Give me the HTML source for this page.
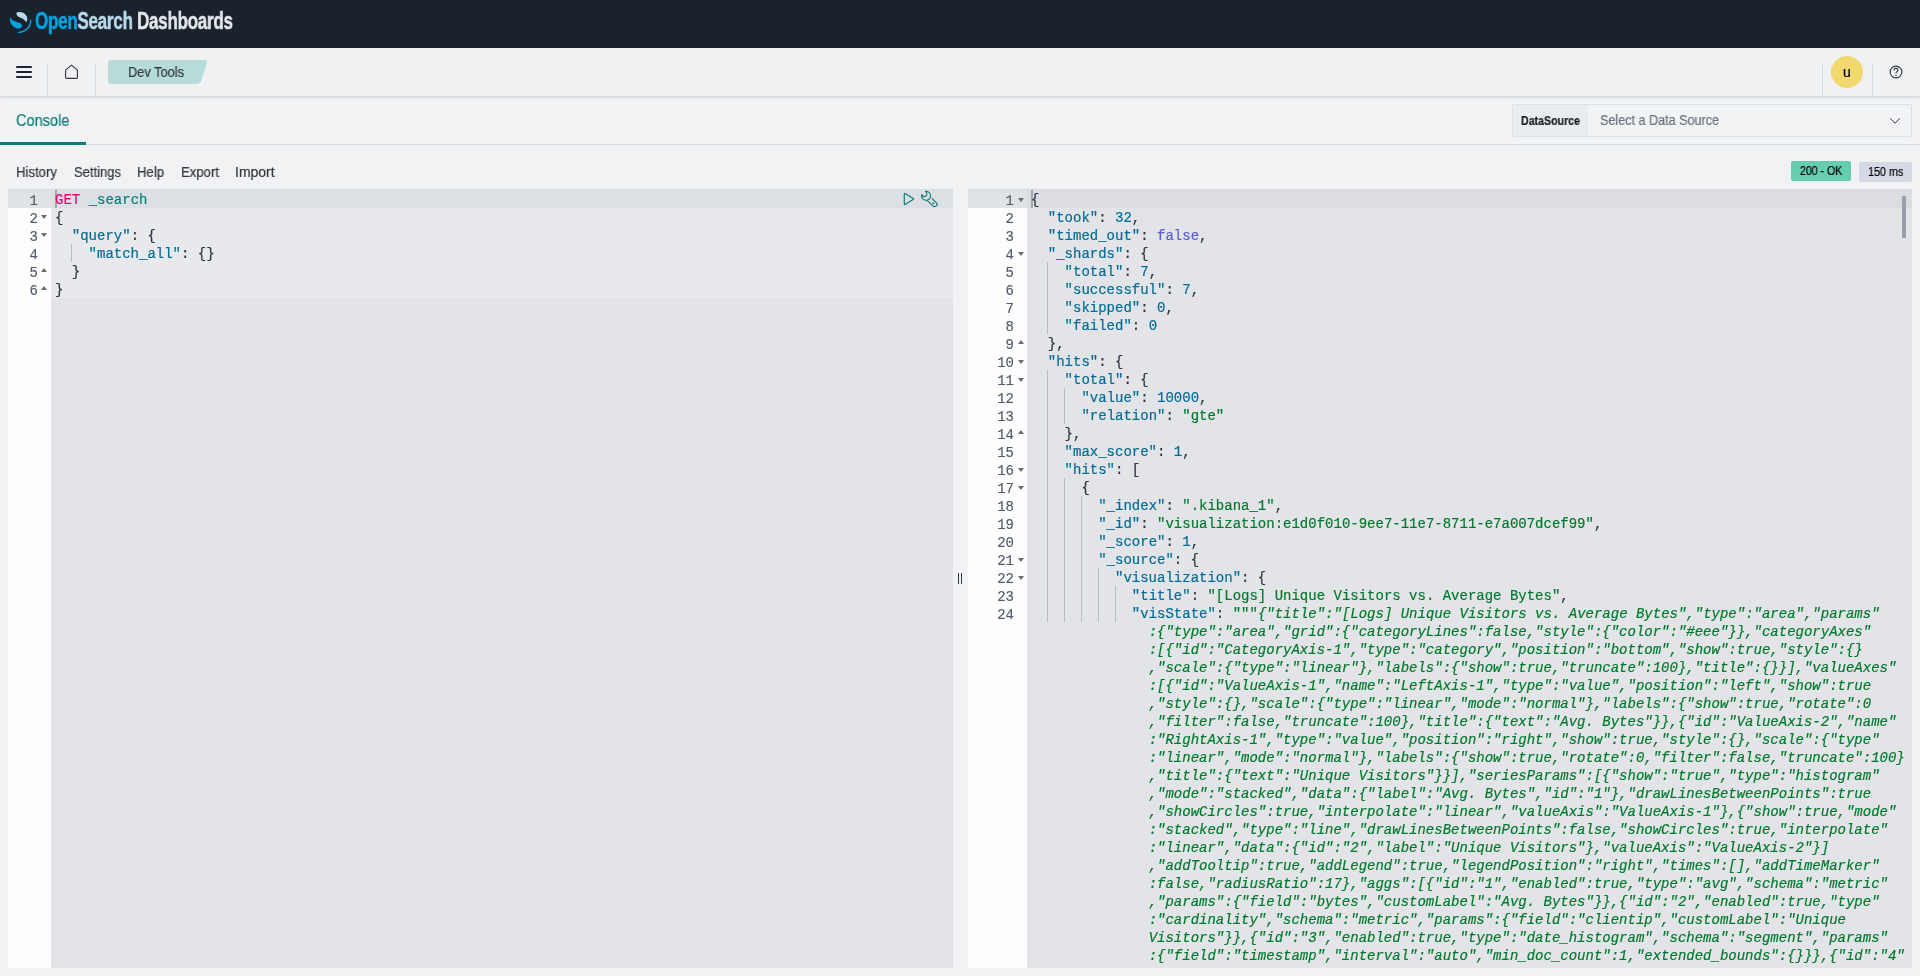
<!DOCTYPE html>
<html><head><meta charset="utf-8">
<style>
*{box-sizing:border-box;margin:0;padding:0}
html,body{width:1920px;height:976px;overflow:hidden;background:#f1f2f4;font-family:"Liberation Sans",sans-serif;position:relative}
.abs{position:absolute}
#hdr{left:0;top:0;width:1920px;height:48px;background:#19222d}
#bar{left:0;top:48px;width:1920px;height:48px;background:#f0f1f3;box-shadow:0 1px 3px rgba(40,60,80,.14),0 2px 4px rgba(40,60,80,.05)}
.vdiv{width:1px;background:#d8dce2}
.txt{white-space:nowrap;transform-origin:0 0;display:inline-block;will-change:transform;-webkit-text-stroke:0.2px currentColor}
.code{font-family:"Liberation Mono",monospace;font-size:14px;line-height:18px;white-space:pre;color:#2f3440;will-change:transform;-webkit-text-stroke:0.2px currentColor}
.gut{font-family:"Liberation Mono",monospace;font-size:14px;line-height:18px;white-space:pre;color:#535b69;text-align:right;will-change:transform;-webkit-text-stroke:0.15px currentColor}
.k{color:#016c95}.s{color:#00792e}.n{color:#016c95}.b{color:#5b5cd6}.p{color:#343741}
.m{color:#dd0a73}.u{color:#0b7f77}
.i{font-style:italic;color:#00792e}
.fold{position:absolute;width:0;height:0;border-left:3px solid transparent;border-right:3px solid transparent}
.fd{border-top:4px solid #6b6b6b}
.fu{border-bottom:4px solid #6b6b6b}
.guide{position:absolute;width:1px;background:#b8bcc4}
</style></head><body>
<!-- top header -->
<div id="hdr" class="abs">
  <svg class="abs" style="left:9px;top:11px" width="24" height="24" viewBox="0 0 24 24">
    <path d="M7.5 1.6 C11 0.2 16 1.6 17.8 5.5 C18.6 7.2 18.3 9.5 17.5 11.3 C16.2 9.3 14.5 8 12 7 C9.5 6 7.2 5 7.5 1.6Z" fill="#b9d9eb"/>
    <path d="M1.2 5.9 C0.2 9 1 12.6 4.2 15.4 C6.5 17.3 10 18.3 12.2 16.5 C13.8 15.2 13 13 11 12 C8 10.5 3 10.5 1.2 5.9Z" fill="#00a3e0"/>
    <path d="M21.6 9.2 C22 14.5 18.5 20.5 9.3 21.4" stroke="#00a3e0" stroke-width="1.3" fill="none" stroke-linecap="round"/>
  </svg>
  <div class="abs txt" style="left:35px;top:7px;font-size:24px;font-weight:700;letter-spacing:-0.4px;transform:scaleX(0.71);-webkit-text-stroke:0.5px currentColor;will-change:transform"><span style="color:#00a3e0">Open</span><span style="color:#b9d9eb">Search</span><span style="color:#e3e6e9"> Dashboards</span></div>
</div>
<!-- second bar -->
<div id="bar" class="abs">
  <div class="abs" style="left:16px;top:18px;width:16px;height:2px;background:#1a2330;border-radius:1px"></div>
  <div class="abs" style="left:16px;top:23px;width:16px;height:2px;background:#1a2330;border-radius:1px"></div>
  <div class="abs" style="left:16px;top:28px;width:16px;height:2px;background:#1a2330;border-radius:1px"></div>
  <div class="abs vdiv" style="left:47px;top:16px;height:32px"></div>
  <svg class="abs" style="left:64px;top:16px" width="16" height="16" viewBox="0 0 16 16">
    <path d="M1.6 6.2 L7.5 1.2 L13.4 6.2 L13.4 13.6 Q13.4 14.4 12.6 14.4 L2.4 14.4 Q1.6 14.4 1.6 13.6 Z" fill="none" stroke="#343741" stroke-width="1.1" stroke-linejoin="round"/>
  </svg>
  <div class="abs vdiv" style="left:95px;top:16px;height:32px"></div>
  <svg class="abs" style="left:108px;top:12px" width="100" height="24" viewBox="0 0 100 24">
    <path d="M3 0 H96 Q100 0 98.8 3.6 L93.5 20 Q92.4 24 88.5 24 H3 Q0 24 0 21 V3 Q0 0 3 0Z" fill="#b6dcda"/>
  </svg>
  <div class="abs txt" style="left:128px;top:16px;font-size:14px;color:#343741;transform:scaleX(0.915)">Dev Tools</div>
  <div class="abs vdiv" style="left:1822px;top:16px;height:32px"></div>
  <div class="abs" style="left:1831px;top:8px;width:32px;height:32px;border-radius:50%;background:#f1d86f"></div>
  <div class="abs txt" style="left:1843px;top:16px;font-size:14px;color:#000">u</div>
  <div class="abs vdiv" style="left:1872px;top:16px;height:32px"></div>
  <svg class="abs" style="left:1889px;top:17px" width="14" height="14" viewBox="0 0 14 14">
    <circle cx="7" cy="7" r="5.9" fill="none" stroke="#343741" stroke-width="1.1"/>
    <path d="M5 5.4 Q5 3.4 7 3.4 Q9 3.4 9 5.2 Q9 6.4 7.6 7 Q7 7.3 7 8.3" fill="none" stroke="#343741" stroke-width="1.1"/>
    <circle cx="7" cy="10.2" r="0.7" fill="#343741"/>
  </svg>
</div>
<!-- tabs -->
<div class="abs txt" style="left:16px;top:112px;font-size:16px;color:#0d7d77;transform:scaleX(0.91)">Console</div>
<div class="abs" style="left:0;top:144px;width:1920px;height:1px;background:#d3d7dd"></div>
<div class="abs" style="left:0;top:142px;width:86px;height:3px;background:#0d7d77"></div>
<!-- datasource -->
<div class="abs" style="left:1512px;top:104px;width:400px;height:33px;border:1px solid #dde1e7;background:#f2f3f5;border-radius:2px"></div>
<div class="abs" style="left:1513px;top:105px;width:75px;height:31px;background:#e9ecf0"></div>
<div class="abs txt" style="left:1521px;top:114px;font-size:12px;font-weight:700;color:#1a1c21;transform:scaleX(0.885)">DataSource</div>
<div class="abs txt" style="left:1600px;top:112px;font-size:14px;color:#69707d;transform:scaleX(0.9)">Select a Data Source</div>
<svg class="abs" style="left:1889px;top:116px" width="12" height="10" viewBox="0 0 12 10">
  <path d="M1.2 2.3 L6 7.3 L10.8 2.3" fill="none" stroke="#343741" stroke-width="1"/>
</svg>
<!-- menu -->
<div class="abs txt" style="left:16px;top:164px;font-size:14px;color:#343741;transform:scaleX(0.94)">History</div>
<div class="abs txt" style="left:74px;top:164px;font-size:14px;color:#343741;transform:scaleX(0.93)">Settings</div>
<div class="abs txt" style="left:137px;top:164px;font-size:14px;color:#343741;transform:scaleX(0.94)">Help</div>
<div class="abs txt" style="left:181px;top:164px;font-size:14px;color:#343741;transform:scaleX(0.94)">Export</div>
<div class="abs txt" style="left:235px;top:164px;font-size:14px;color:#343741;transform:scaleX(1.0)">Import</div>
<!-- badges -->
<div class="abs" style="left:1791px;top:161px;width:60px;height:20px;background:#67cdb1;border-radius:2px"></div>
<div class="abs txt" style="left:1800px;top:164px;font-size:12px;color:#000;transform:scaleX(0.88)">200 - OK</div>
<div class="abs" style="left:1859px;top:162px;width:53px;height:20px;background:#d3dae6;border-radius:2px"></div>
<div class="abs txt" style="left:1868px;top:165px;font-size:12px;color:#000;transform:scaleX(0.9)">150 ms</div>

<!-- LEFT EDITOR -->
<div class="abs" style="left:8px;top:189px;width:945px;height:779px;background:#e3e4e8;overflow:hidden">
  <div class="abs" style="left:0;top:1px;width:43px;height:778px;background:#fdfdfe"></div>
  <div class="abs" style="left:43px;top:1px;width:902px;height:108px;background:#e7e9ec"></div>
  <div class="abs" style="left:0;top:0;width:945px;height:1px;background:#d6d9dd"></div>
  <div class="abs" style="left:0;top:1px;width:945px;height:18px;background:#dcdfe3"></div>
  <div class="abs" style="left:0;top:1px;width:43px;height:18px;background:#e0e3e6"></div>
  <div class="abs gut" style="left:0;top:3px;width:30px">1
2
3
4
5
6</div>
  <div class="fold fd" style="left:33px;top:26px"></div>
  <div class="fold fd" style="left:33px;top:44px"></div>
  <div class="fold fu" style="left:33px;top:79px"></div>
  <div class="fold fu" style="left:33px;top:97px"></div>
  <div class="abs" style="left:47px;top:1px;width:2px;height:18px;background:#a3a7ae"></div>
  <div class="guide" style="left:63px;top:55px;height:18px"></div>
  <div class="abs code" style="left:47px;top:2px"><span class="m">GET</span> <span class="u">_search</span>
{
  <span class="k">"query"</span>: {
    <span class="k">"match_all"</span>: {}
  }
}</div>
  <svg class="abs" style="left:894px;top:3px" width="14" height="16" viewBox="0 0 14 16">
    <path d="M2.3 2.4 Q2.3 1 3.5 1.7 L11.2 6.4 Q12 7 11.2 7.6 L3.5 12.3 Q2.3 13 2.3 11.6Z" fill="none" stroke="#0d7d77" stroke-width="1.2" stroke-linejoin="round"/>
  </svg>
  <svg class="abs" style="left:911px;top:0px" width="20" height="20" viewBox="0 0 20 20">
    <path d="M2.7 5.6 A4.5 4.5 0 1 0 6.4 2.3 C8.3 3.3 8.4 6.4 6.8 7.3 C5.4 8.1 3.8 7.3 2.7 5.6 Z" fill="none" stroke="#0d7d77" stroke-width="1.15" stroke-linejoin="round"/>
    <path d="M8.3 11.7 L13.9 16.9 A2.35 2.35 0 0 0 17.3 13.6 L13.2 9.6" fill="none" stroke="#0d7d77" stroke-width="1.15" stroke-linecap="round" stroke-linejoin="round"/>
    <circle cx="14.3" cy="14.3" r="0.95" fill="#0d7d77"/>
  </svg>
</div>
<!-- resizer -->
<div class="abs" style="left:958px;top:573px;width:1px;height:11px;background:#343741"></div>
<div class="abs" style="left:961px;top:573px;width:1px;height:11px;background:#343741"></div>

<!-- RIGHT EDITOR -->
<div id="out" class="abs" style="left:968px;top:189px;width:944px;height:779px;background:#e3e4e8;overflow:hidden">
  <div class="abs" style="left:0;top:1px;width:59px;height:778px;background:#fdfdfe"></div>
    <div class="abs" style="left:0;top:1px;width:944px;height:18px;background:#dbdde1"></div>
  <div class="abs" style="left:0;top:1px;width:59px;height:18px;background:#e0e3e6"></div>
  <div class="abs" style="left:0;top:0;width:944px;height:1px;background:#d6d8dc"></div>

<div class="abs gut" style="left:0;top:3px;width:46px">1
2
3
4
5
6
7
8
9
10
11
12
13
14
15
16
17
18
19
20
21
22
23
24</div>
<div class="fold fd" style="left:50px;top:9px"></div>
<div class="fold fd" style="left:50px;top:63px"></div>
<div class="fold fu" style="left:50px;top:151px"></div>
<div class="fold fd" style="left:50px;top:171px"></div>
<div class="fold fd" style="left:50px;top:189px"></div>
<div class="fold fu" style="left:50px;top:241px"></div>
<div class="fold fd" style="left:50px;top:279px"></div>
<div class="fold fd" style="left:50px;top:297px"></div>
<div class="fold fd" style="left:50px;top:369px"></div>
<div class="fold fd" style="left:50px;top:387px"></div>
<div class="guide" style="left:79.3px;top:73px;height:18px"></div>
<div class="guide" style="left:79.3px;top:91px;height:18px"></div>
<div class="guide" style="left:79.3px;top:109px;height:18px"></div>
<div class="guide" style="left:79.3px;top:127px;height:18px"></div>
<div class="guide" style="left:79.3px;top:181px;height:18px"></div>
<div class="guide" style="left:79.3px;top:199px;height:18px"></div>
<div class="guide" style="left:96.1px;top:199px;height:18px"></div>
<div class="guide" style="left:79.3px;top:217px;height:18px"></div>
<div class="guide" style="left:96.1px;top:217px;height:18px"></div>
<div class="guide" style="left:79.3px;top:235px;height:18px"></div>
<div class="guide" style="left:79.3px;top:253px;height:18px"></div>
<div class="guide" style="left:79.3px;top:271px;height:18px"></div>
<div class="guide" style="left:79.3px;top:289px;height:18px"></div>
<div class="guide" style="left:96.1px;top:289px;height:18px"></div>
<div class="guide" style="left:79.3px;top:307px;height:18px"></div>
<div class="guide" style="left:96.1px;top:307px;height:18px"></div>
<div class="guide" style="left:112.9px;top:307px;height:18px"></div>
<div class="guide" style="left:79.3px;top:325px;height:18px"></div>
<div class="guide" style="left:96.1px;top:325px;height:18px"></div>
<div class="guide" style="left:112.9px;top:325px;height:18px"></div>
<div class="guide" style="left:79.3px;top:343px;height:18px"></div>
<div class="guide" style="left:96.1px;top:343px;height:18px"></div>
<div class="guide" style="left:112.9px;top:343px;height:18px"></div>
<div class="guide" style="left:79.3px;top:361px;height:18px"></div>
<div class="guide" style="left:96.1px;top:361px;height:18px"></div>
<div class="guide" style="left:112.9px;top:361px;height:18px"></div>
<div class="guide" style="left:79.3px;top:379px;height:18px"></div>
<div class="guide" style="left:96.1px;top:379px;height:18px"></div>
<div class="guide" style="left:112.9px;top:379px;height:18px"></div>
<div class="guide" style="left:129.7px;top:379px;height:18px"></div>
<div class="guide" style="left:79.3px;top:397px;height:18px"></div>
<div class="guide" style="left:96.1px;top:397px;height:18px"></div>
<div class="guide" style="left:112.9px;top:397px;height:18px"></div>
<div class="guide" style="left:129.7px;top:397px;height:18px"></div>
<div class="guide" style="left:146.5px;top:397px;height:18px"></div>
<div class="guide" style="left:79.3px;top:415px;height:18px"></div>
<div class="guide" style="left:96.1px;top:415px;height:18px"></div>
<div class="guide" style="left:112.9px;top:415px;height:18px"></div>
<div class="guide" style="left:129.7px;top:415px;height:18px"></div>
<div class="guide" style="left:146.5px;top:415px;height:18px"></div>
<div class="abs" style="left:63px;top:1px;width:2px;height:18px;background:#a3a7ae"></div>
<div class="abs code" style="left:63px;top:2px">{
  <span class="k">&quot;took&quot;</span>: <span class="n">32</span>,
  <span class="k">&quot;timed_out&quot;</span>: <span class="b">false</span>,
  <span class="k">&quot;_shards&quot;</span>: {
    <span class="k">&quot;total&quot;</span>: <span class="n">7</span>,
    <span class="k">&quot;successful&quot;</span>: <span class="n">7</span>,
    <span class="k">&quot;skipped&quot;</span>: <span class="n">0</span>,
    <span class="k">&quot;failed&quot;</span>: <span class="n">0</span>
  },
  <span class="k">&quot;hits&quot;</span>: {
    <span class="k">&quot;total&quot;</span>: {
      <span class="k">&quot;value&quot;</span>: <span class="n">10000</span>,
      <span class="k">&quot;relation&quot;</span>: <span class="s">&quot;gte&quot;</span>
    },
    <span class="k">&quot;max_score&quot;</span>: <span class="n">1</span>,
    <span class="k">&quot;hits&quot;</span>: [
      {
        <span class="k">&quot;_index&quot;</span>: <span class="s">&quot;.kibana_1&quot;</span>,
        <span class="k">&quot;_id&quot;</span>: <span class="s">&quot;visualization:e1d0f010-9ee7-11e7-8711-e7a007dcef99&quot;</span>,
        <span class="k">&quot;_score&quot;</span>: <span class="n">1</span>,
        <span class="k">&quot;_source&quot;</span>: {
          <span class="k">&quot;visualization&quot;</span>: {
            <span class="k">&quot;title&quot;</span>: <span class="s">&quot;[Logs] Unique Visitors vs. Average Bytes&quot;</span>,
            <span class="k">"visState"</span>: <span class="s">"""</span><span class="i">{&quot;title&quot;:&quot;[Logs] Unique Visitors vs. Average Bytes&quot;,&quot;type&quot;:&quot;area&quot;,&quot;params&quot;</span>
              <span class="i">:{&quot;type&quot;:&quot;area&quot;,&quot;grid&quot;:{&quot;categoryLines&quot;:false,&quot;style&quot;:{&quot;color&quot;:&quot;#eee&quot;}},&quot;categoryAxes&quot;</span>
              <span class="i">:[{&quot;id&quot;:&quot;CategoryAxis-1&quot;,&quot;type&quot;:&quot;category&quot;,&quot;position&quot;:&quot;bottom&quot;,&quot;show&quot;:true,&quot;style&quot;:{}</span>
              <span class="i">,&quot;scale&quot;:{&quot;type&quot;:&quot;linear&quot;},&quot;labels&quot;:{&quot;show&quot;:true,&quot;truncate&quot;:100},&quot;title&quot;:{}}],&quot;valueAxes&quot;</span>
              <span class="i">:[{&quot;id&quot;:&quot;ValueAxis-1&quot;,&quot;name&quot;:&quot;LeftAxis-1&quot;,&quot;type&quot;:&quot;value&quot;,&quot;position&quot;:&quot;left&quot;,&quot;show&quot;:true</span>
              <span class="i">,&quot;style&quot;:{},&quot;scale&quot;:{&quot;type&quot;:&quot;linear&quot;,&quot;mode&quot;:&quot;normal&quot;},&quot;labels&quot;:{&quot;show&quot;:true,&quot;rotate&quot;:0</span>
              <span class="i">,&quot;filter&quot;:false,&quot;truncate&quot;:100},&quot;title&quot;:{&quot;text&quot;:&quot;Avg. Bytes&quot;}},{&quot;id&quot;:&quot;ValueAxis-2&quot;,&quot;name&quot;</span>
              <span class="i">:&quot;RightAxis-1&quot;,&quot;type&quot;:&quot;value&quot;,&quot;position&quot;:&quot;right&quot;,&quot;show&quot;:true,&quot;style&quot;:{},&quot;scale&quot;:{&quot;type&quot;</span>
              <span class="i">:&quot;linear&quot;,&quot;mode&quot;:&quot;normal&quot;},&quot;labels&quot;:{&quot;show&quot;:true,&quot;rotate&quot;:0,&quot;filter&quot;:false,&quot;truncate&quot;:100}</span>
              <span class="i">,&quot;title&quot;:{&quot;text&quot;:&quot;Unique Visitors&quot;}}],&quot;seriesParams&quot;:[{&quot;show&quot;:&quot;true&quot;,&quot;type&quot;:&quot;histogram&quot;</span>
              <span class="i">,&quot;mode&quot;:&quot;stacked&quot;,&quot;data&quot;:{&quot;label&quot;:&quot;Avg. Bytes&quot;,&quot;id&quot;:&quot;1&quot;},&quot;drawLinesBetweenPoints&quot;:true</span>
              <span class="i">,&quot;showCircles&quot;:true,&quot;interpolate&quot;:&quot;linear&quot;,&quot;valueAxis&quot;:&quot;ValueAxis-1&quot;},{&quot;show&quot;:true,&quot;mode&quot;</span>
              <span class="i">:&quot;stacked&quot;,&quot;type&quot;:&quot;line&quot;,&quot;drawLinesBetweenPoints&quot;:false,&quot;showCircles&quot;:true,&quot;interpolate&quot;</span>
              <span class="i">:&quot;linear&quot;,&quot;data&quot;:{&quot;id&quot;:&quot;2&quot;,&quot;label&quot;:&quot;Unique Visitors&quot;},&quot;valueAxis&quot;:&quot;ValueAxis-2&quot;}]</span>
              <span class="i">,&quot;addTooltip&quot;:true,&quot;addLegend&quot;:true,&quot;legendPosition&quot;:&quot;right&quot;,&quot;times&quot;:[],&quot;addTimeMarker&quot;</span>
              <span class="i">:false,&quot;radiusRatio&quot;:17},&quot;aggs&quot;:[{&quot;id&quot;:&quot;1&quot;,&quot;enabled&quot;:true,&quot;type&quot;:&quot;avg&quot;,&quot;schema&quot;:&quot;metric&quot;</span>
              <span class="i">,&quot;params&quot;:{&quot;field&quot;:&quot;bytes&quot;,&quot;customLabel&quot;:&quot;Avg. Bytes&quot;}},{&quot;id&quot;:&quot;2&quot;,&quot;enabled&quot;:true,&quot;type&quot;</span>
              <span class="i">:&quot;cardinality&quot;,&quot;schema&quot;:&quot;metric&quot;,&quot;params&quot;:{&quot;field&quot;:&quot;clientip&quot;,&quot;customLabel&quot;:&quot;Unique</span>
              <span class="i">Visitors&quot;}},{&quot;id&quot;:&quot;3&quot;,&quot;enabled&quot;:true,&quot;type&quot;:&quot;date_histogram&quot;,&quot;schema&quot;:&quot;segment&quot;,&quot;params&quot;</span>
              <span class="i">:{&quot;field&quot;:&quot;timestamp&quot;,&quot;interval&quot;:&quot;auto&quot;,&quot;min_doc_count&quot;:1,&quot;extended_bounds&quot;:{}}},{&quot;id&quot;:&quot;4&quot;</span></div>
<div class="abs" style="left:934px;top:7px;width:4px;height:42px;background:#9aa0aa"></div>
</div>
</body></html>
